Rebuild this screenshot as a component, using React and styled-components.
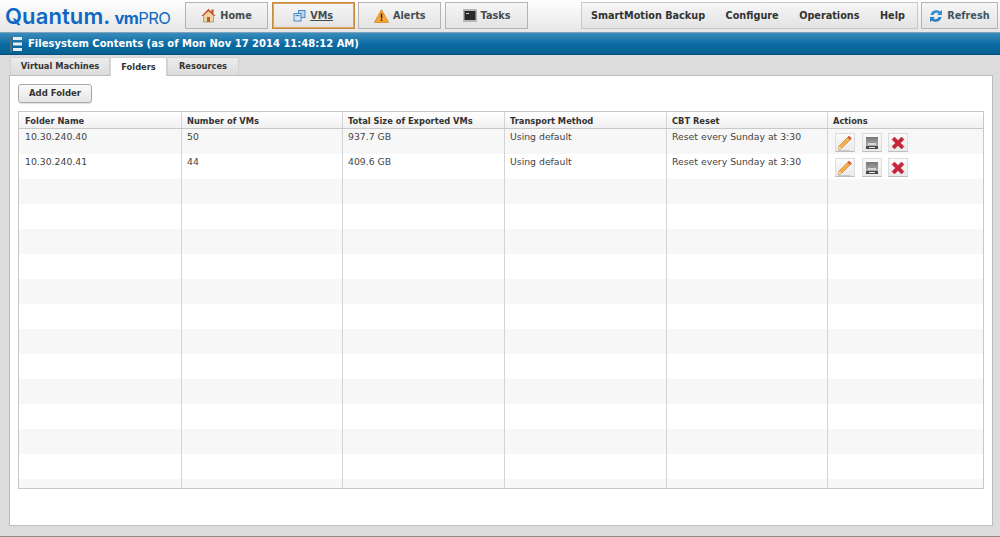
import styled, { createGlobalStyle } from "styled-components";

const GlobalStyle = createGlobalStyle`
    html, body {
        margin: 0;
        padding: 0;
        height: 100%;
        overflow: hidden;
        background: #dcdcdc;
        font-family: "DejaVu Sans", Verdana, sans-serif;
    }
`;

const Page = styled.div`
    width: 1000px;
    height: 537px;
    display: flex;
    flex-direction: column;
    overflow: hidden;
    background: #dcdcdc;
    border-bottom: 1px solid #8d8d8d;
    box-sizing: border-box;
`;

const TopBar = styled.div`
    height: 32px;
    display: flex;
    align-items: flex-start;
    padding-top: 2px;
    box-sizing: border-box;
    background: linear-gradient(#ffffff, #e6e6e6);
`;

const Logo = styled.div`
    width: 185px;
    padding: 1px 0 0 5px;
    box-sizing: border-box;
    display: flex;
    align-items: baseline;
    white-space: nowrap;
    font-family: Inter, "Liberation Sans", Arial, sans-serif;
    color: #0f68c4;
`;

const LogoMain = styled.span`
    font-size: 22px;
    font-weight: 600;
    letter-spacing: 0.1px;
`;

const LogoSub = styled.span`
    font-size: 16.5px;
    font-weight: 700;
    margin-left: 4px;
    letter-spacing: -0.6px;
`;

const LogoLight = styled.span`
    font-weight: 400;
`;

const NavRow = styled.div`
    display: flex;
    gap: 3.67px;
`;

const NavButton = styled.div`
    width: 83px;
    height: 27px;
    box-sizing: border-box;
    display: flex;
    align-items: center;
    justify-content: center;
    gap: 4px;
    font-size: 9.7px;
    font-weight: 700;
    color: #444c50;
    background: linear-gradient(#f6f6f6, #e3e3e3);
    border: 1px solid ${({ $active }) => ($active ? "#c88a3c" : "#b4b4b4")};
    outline: ${({ $active }) => ($active ? "1px solid #d9a565" : "none")};
    outline-offset: -2px;
    text-decoration: ${({ $active }) => ($active ? "underline" : "none")};
`;

const MenuGroup = styled.div`
    margin-left: 53px;
    width: 337px;
    height: 27px;
    box-sizing: border-box;
    display: flex;
    align-items: center;
    padding-left: 9px;
    gap: 20.5px;
    white-space: nowrap;
    font-size: 9.7px;
    font-weight: 700;
    color: #333;
    background: linear-gradient(#f6f6f6, #e3e3e3);
    border: 1px solid #c8c8c8;
`;

const RefreshButton = styled.div`
    margin-left: 3px;
    width: 77px;
    height: 27px;
    box-sizing: border-box;
    display: flex;
    align-items: center;
    justify-content: center;
    gap: 4px;
    font-size: 9.7px;
    font-weight: 700;
    color: #3f5560;
    background: linear-gradient(#f6f6f6, #e3e3e3);
    border: 1px solid #b4b4b4;
`;

const TitleBar = styled.div`
    height: 23px;
    box-sizing: border-box;
    display: flex;
    align-items: center;
    gap: 6px;
    padding-left: 10px;
    font-size: 10px;
    font-weight: 700;
    color: #fff;
    border-top: 1px solid #7ea3bd;
    border-bottom: 1px solid #05507e;
    background: linear-gradient(#3a8cbc, #0a6aa3 55%, #05608f);
`;

const TabRow = styled.div`
    display: flex;
    margin: 2px 0 0 10px;
    height: 18px;
`;

const Tab = styled.div`
    width: ${({ $w }) => $w}px;
    box-sizing: border-box;
    padding-bottom: 1px;
    display: flex;
    align-items: center;
    justify-content: center;
    font-size: 8.3px;
    font-weight: 700;
    color: #333;
    border-radius: 2px 2px 0 0;
    background: ${({ $active }) => ($active ? "#fff" : "linear-gradient(#ececec, #dcdcdc)")};
    border: 1px solid #d2d2d2;
    border-bottom: none;
    position: relative;
    z-index: ${({ $active }) => ($active ? 1 : 0)};
    margin-bottom: ${({ $active }) => ($active ? "-1px" : "0")};
`;

const Panel = styled.div`
    margin-left: 9px;
    width: 984px;
    height: 451px;
    box-sizing: border-box;
    background: #fff;
    border: 1px solid #b9bfbc;
    padding: 8px 8px 0 8px;
`;

const AddButton = styled.div`
    width: 74px;
    height: 19px;
    box-sizing: border-box;
    padding-bottom: 1px;
    display: flex;
    align-items: center;
    justify-content: center;
    font-size: 8.5px;
    font-weight: 700;
    color: #333;
    border: 1px solid #a8a8a8;
    border-radius: 3px;
    background: linear-gradient(#fafafa, #e6e6e6);
    box-shadow: 0 1px 1px rgba(0, 0, 0, 0.12);
`;

const Grid = styled.div`
    margin-top: 8px;
    height: 378px;
    box-sizing: border-box;
    border: 1px solid #c8c8c8;
    overflow: hidden;
`;

const columns = "163px 161px 162px 162px 161px 1fr";

const HeadRow = styled.div`
    display: grid;
    grid-template-columns: ${columns};
    height: 17px;
    box-sizing: border-box;
    border-bottom: 1px solid #c8c8c8;
    background: linear-gradient(#ffffff, #f0f0f0);
`;

const HeadCell = styled.div`
    padding: 4px 0 0 5px;
    font-size: 8.3px;
    font-weight: 700;
    color: #333;
    white-space: nowrap;
    border-right: 1px solid #d4d4d4;
    &:first-child {
        padding-left: 6px;
    }
    &:last-child {
        border-right: none;
    }
`;

const Row = styled.div`
    display: grid;
    grid-template-columns: ${columns};
    height: 25px;
    background: ${({ $odd }) => ($odd ? "#f7f7f7" : "#fff")};
`;

const Cell = styled.div`
    padding: 3px 0 0 5px;
    font-size: 9.3px;
    line-height: 10px;
    color: #444;
    white-space: nowrap;
    border-right: 1px solid #d4d4d4;
    &:first-child {
        padding-left: 6px;
    }
    &:last-child {
        border-right: none;
    }
`;

const ActionCell = styled(Cell)`
    display: flex;
    gap: 6.5px;
    padding: 4px 0 0 7px;
`;

const IconButton = styled.div`
    width: 20px;
    height: 19px;
    box-sizing: border-box;
    display: flex;
    align-items: center;
    justify-content: center;
    border: 1px solid #dcdcdc;
    border-bottom-color: #bdbdbd;
    background: linear-gradient(#fbfbfb, #e9e9e9);
`;

function HomeIcon() {
    return (
        <svg width="15" height="15" viewBox="0 0 15 15">
            <rect x="10.5" y="1.5" width="2" height="4" fill="#a9522e" />
            <path d="M2.5 7 L7.5 2.5 L12.5 7 L12.5 14 L2.5 14 Z" fill="#efd3a6" stroke="#9a7a50" strokeWidth="0.6" />
            <path d="M7.5 0.8 L14.6 8 L12.8 8 L7.5 3.2 L2.2 8 L0.4 8 Z" fill="#c6562e" />
            <rect x="6" y="9" width="3" height="5" fill="#b8641f" />
        </svg>
    );
}

function VmsIcon() {
    return (
        <svg width="13" height="13" viewBox="0 0 13 13">
            <rect x="5.5" y="1.5" width="6.5" height="7" fill="#bcd6ef" stroke="#4a86c2" />
            <rect x="1" y="4.5" width="7" height="7.5" fill="#d8e8f7" stroke="#4a86c2" />
            <rect x="2.5" y="6" width="4" height="1.2" fill="#4a86c2" />
        </svg>
    );
}

function AlertIcon() {
    return (
        <svg width="15" height="14" viewBox="0 0 15 14">
            <path d="M7.5 0.6 L14.6 13.4 L0.4 13.4 Z" fill="#f3a53a" stroke="#d98a22" strokeWidth="0.8" />
            <rect x="6.8" y="4.5" width="1.5" height="5" fill="#3a2a10" />
            <rect x="6.8" y="10.4" width="1.5" height="1.6" fill="#3a2a10" />
        </svg>
    );
}

function TasksIcon() {
    return (
        <svg width="14" height="13" viewBox="0 0 14 13">
            <rect x="0" y="0" width="14" height="13" fill="#b5b5b5" />
            <rect x="1.5" y="2" width="11" height="9" fill="#2a2a2a" />
            <rect x="3" y="4" width="3" height="1" fill="#cfcfcf" />
        </svg>
    );
}

function RefreshIcon() {
    return (
        <svg width="14" height="14" viewBox="0 0 14 14">
            <path d="M1.5 6 C2 2.5 5 0.8 8 1.2 C9.5 1.4 10.4 2 11 2.6 L13 1 L13 6 L8 6 L9.6 4.4 C8.4 3.4 5.6 3.2 4.4 6 Z" fill="#2f8fd6" />
            <path d="M12.5 8 C12 11.5 9 13.2 6 12.8 C4.5 12.6 3.6 12 3 11.4 L1 13 L1 8 L6 8 L4.4 9.6 C5.6 10.6 8.4 10.8 9.6 8 Z" fill="#2a7fc4" />
        </svg>
    );
}

function ListIcon() {
    return (
        <svg width="12" height="16" viewBox="0 0 12 16">
            <rect x="0" y="0" width="2" height="16" fill="#5c6a72" />
            <rect x="3" y="1" width="9" height="3" fill="#e6eef3" />
            <rect x="3" y="6.5" width="9" height="3" fill="#e6eef3" />
            <rect x="3" y="12" width="9" height="3" fill="#e6eef3" />
        </svg>
    );
}

function PencilIcon() {
    return (
        <svg width="16" height="16" viewBox="0 0 16 16">
            <path d="M12 1 L14.5 3.5 L4.5 13.5 L1.5 14.5 L2 11 Z" fill="#f3b04a" stroke="#c77a20" strokeWidth="0.6" />
            <path d="M12 1 L14.5 3.5 L13 5 L10.5 2.5 Z" fill="#d9584c" />
            <path d="M2 11 L4.5 13.5 L1.5 14.5 Z" fill="#efd9b0" />
            <path d="M1 15.5 L13 15.5" stroke="#c9c9c9" />
        </svg>
    );
}

function DiskIcon() {
    return (
        <svg width="14" height="14" viewBox="0 0 14 14">
            <defs>
                <linearGradient id="diskBody" x1="0" y1="0" x2="0" y2="1">
                    <stop offset="0" stopColor="#777777" />
                    <stop offset="1" stopColor="#bdbdbd" />
                </linearGradient>
            </defs>
            <rect x="1" y="1" width="12" height="12" fill="url(#diskBody)" />
            <rect x="3" y="7" width="8" height="2" fill="#d8d8d8" />
            <rect x="1" y="10" width="12" height="3" fill="#4a4a4a" />
            <rect x="4" y="11" width="6" height="1" fill="#e4e4e4" />
        </svg>
    );
}

function DeleteIcon() {
    return (
        <svg width="14" height="14" viewBox="0 0 14 14">
            <path d="M3.5 1 L7 4.5 L10.5 1 L13 3.5 L9.5 7 L13 10.5 L10.5 13 L7 9.5 L3.5 13 L1 10.5 L4.5 7 L1 3.5 Z" fill="#c8243a" stroke="#a8141f" strokeWidth="0.4" />
        </svg>
    );
}

const heads = ["Folder Name", "Number of VMs", "Total Size of Exported VMs", "Transport Method", "CBT Reset", "Actions"];

const folders = [
    { name: "10.30.240.40", vms: "50", size: "937.7 GB" },
    { name: "10.30.240.41", vms: "44", size: "409.6 GB" },
];

const emptyRows = Array.from({ length: 13 }, (_, i) => i + 2);

export default function App() {
    return (
        <Page>
            <GlobalStyle />
            <TopBar>
                <Logo>
                    <LogoMain>Quantum.</LogoMain>
                    <LogoSub>vm<LogoLight>PRO</LogoLight></LogoSub>
                </Logo>
                <NavRow>
                    <NavButton><HomeIcon /> Home</NavButton>
                    <NavButton $active><VmsIcon /> VMs</NavButton>
                    <NavButton><AlertIcon /> Alerts</NavButton>
                    <NavButton><TasksIcon /> Tasks</NavButton>
                </NavRow>
                <MenuGroup>
                    <span>SmartMotion Backup</span>
                    <span>Configure</span>
                    <span>Operations</span>
                    <span>Help</span>
                </MenuGroup>
                <RefreshButton><RefreshIcon /> Refresh</RefreshButton>
            </TopBar>
            <TitleBar>
                <ListIcon />
                Filesystem Contents (as of Mon Nov 17 2014 11:48:12 AM)
            </TitleBar>
            <TabRow>
                <Tab $w={100}>Virtual Machines</Tab>
                <Tab $w={57} $active>Folders</Tab>
                <Tab $w={72}>Resources</Tab>
            </TabRow>
            <Panel>
                <AddButton>Add Folder</AddButton>
                <Grid>
                    <HeadRow>
                        {heads.map((h) => <HeadCell key={h}>{h}</HeadCell>)}
                    </HeadRow>
                    {folders.map((f, i) => (
                        <Row key={f.name} $odd={i % 2 === 0}>
                            <Cell>{f.name}</Cell>
                            <Cell>{f.vms}</Cell>
                            <Cell>{f.size}</Cell>
                            <Cell>Using default</Cell>
                            <Cell>Reset every Sunday at 3:30</Cell>
                            <ActionCell>
                                <IconButton><PencilIcon /></IconButton>
                                <IconButton><DiskIcon /></IconButton>
                                <IconButton><DeleteIcon /></IconButton>
                            </ActionCell>
                        </Row>
                    ))}
                    {emptyRows.map((n) => (
                        <Row key={n} $odd={n % 2 === 0}>
                            <Cell /><Cell /><Cell /><Cell /><Cell /><Cell />
                        </Row>
                    ))}
                </Grid>
            </Panel>
        </Page>
    );
}
